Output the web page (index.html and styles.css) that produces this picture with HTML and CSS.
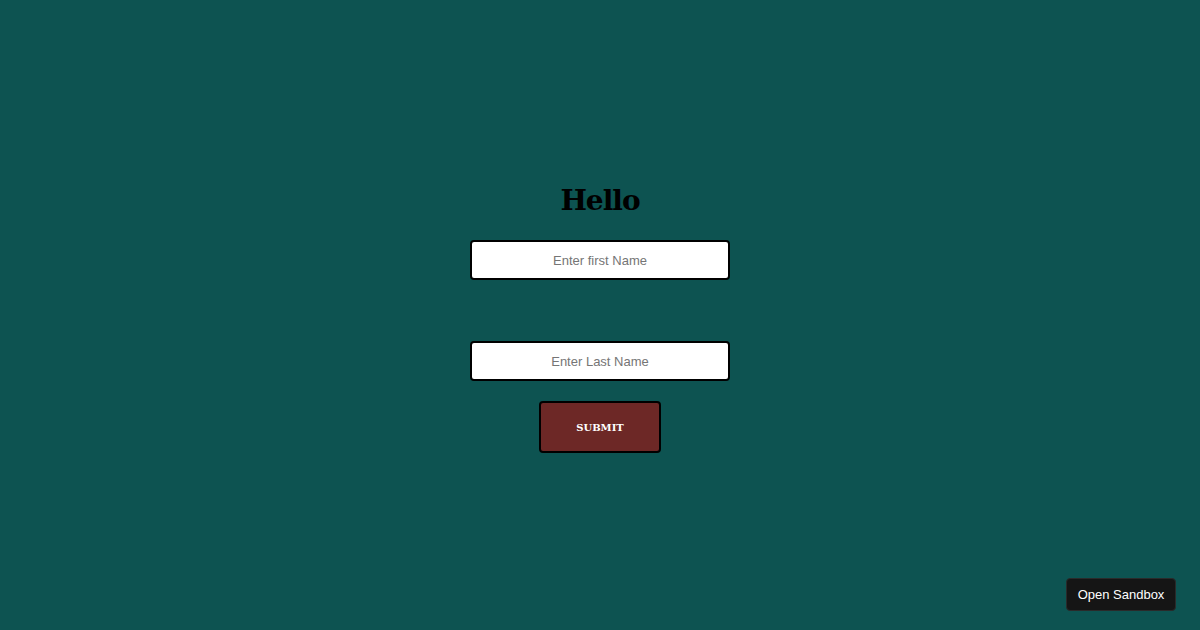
FILE: index.html
```html
<!DOCTYPE html>
<html>
<head>
<meta charset="utf-8">
<link rel="stylesheet" href="styles.css">
</head>
<body>
<main class="page">
  <form class="form">
    <h1 class="title">Hello</h1>
    <input class="field" type="text" placeholder="Enter first Name">
    <input class="field field-last" type="text" placeholder="Enter Last Name">
    <button class="submit" type="button">SUBMIT</button>
  </form>
</main>
<button class="sandbox" type="button">Open Sandbox</button>
</body>
</html>
```
FILE: styles.css
```css
html, body {
  margin: 0;
  padding: 0;
  background: #0d5351;
}
.page {
  height: 630px;
  display: flex;
  align-items: center;
  justify-content: center;
}
.form {
  display: flex;
  flex-direction: column;
  align-items: center;
  margin-top: 3px;
}
.title {
  margin: 0 0 19px;
  height: 41px;
  line-height: 42px;
  font-family: "DejaVu Serif", serif;
  font-weight: bold;
  font-size: 28px;
  color: #000;
  letter-spacing: -1px;
}
.field {
  box-sizing: border-box;
  width: 260px;
  height: 40px;
  border: 2px solid #000;
  border-radius: 4px;
  background: #fff;
  text-align: center;
  font-family: "Liberation Sans", Arial, sans-serif;
  font-size: 13px;
  margin: 0;
  padding: 0;
  outline: none;
}
.field::placeholder {
  color: #757575;
}
.field-last {
  margin-top: 61px;
}
.submit {
  box-sizing: border-box;
  margin-top: 20px;
  width: 122px;
  height: 52px;
  background: #6d2826;
  border: 2px solid #000;
  border-radius: 4px;
  color: #fff;
  font-family: "DejaVu Serif", serif;
  font-weight: bold;
  font-size: 10px;
  padding: 0;
}
.sandbox {
  position: fixed;
  right: 24px;
  bottom: 19px;
  width: 110px;
  height: 33px;
  background: #151515;
  color: #fff;
  border: 1px solid #2a2a2a;
  border-radius: 4px;
  font-family: "Liberation Sans", Arial, sans-serif;
  font-size: 13px;
  padding: 0;
}
```
